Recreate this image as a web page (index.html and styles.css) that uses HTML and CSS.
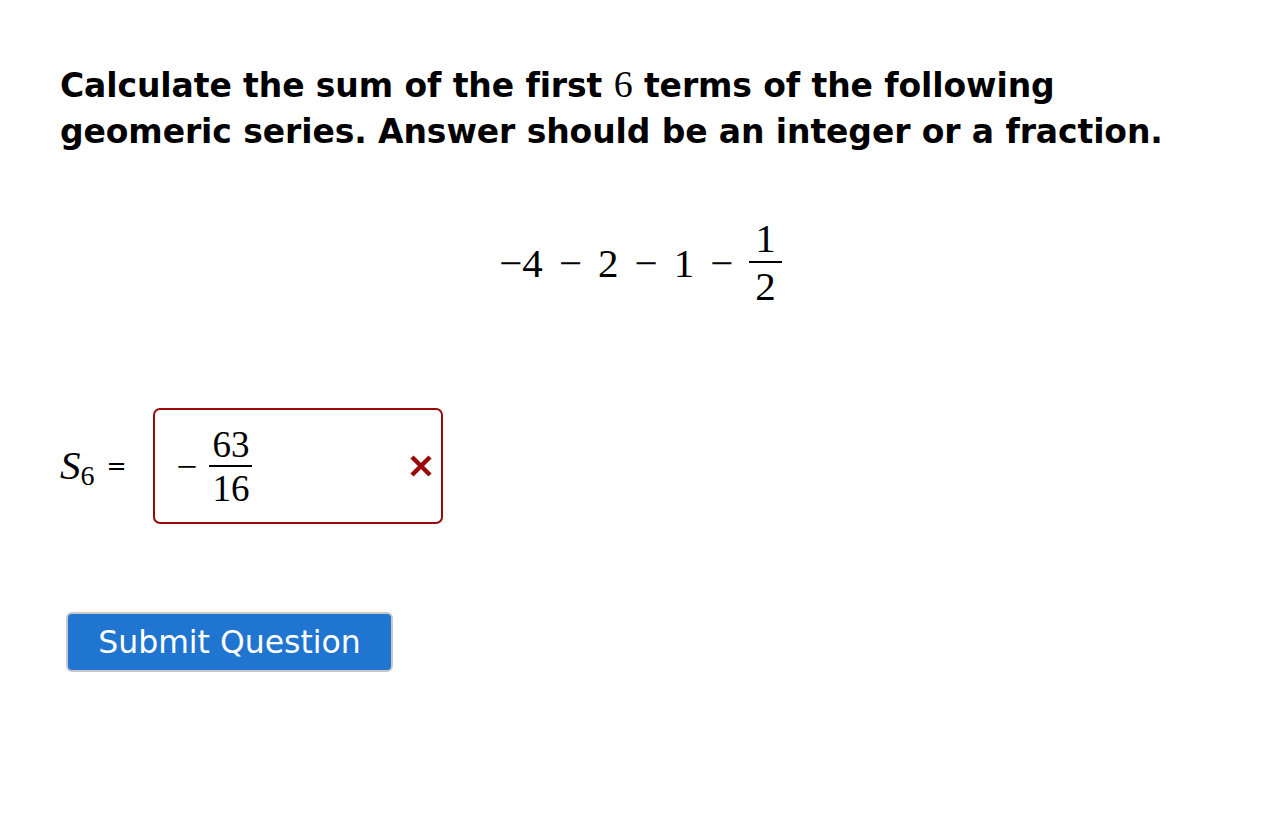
FILE: index.html
```html
<!DOCTYPE html>
<html lang="en">
<head>
  <meta charset="UTF-8" />
  <title>Geometric Series</title>
  <link rel="stylesheet" href="styles.css">
</head>
<body>
  <div class="question">
    <!-- Prompt -->
    <p class="prompt">Calculate the sum of the first <span class="num">6</span> terms of the following geomeric series. Answer should be an integer or a fraction.</p>

    <!-- Series -->
    <div class="series">
      <span>&minus;4</span><span class="op">&minus;</span><span>2</span><span class="op">&minus;</span><span>1</span><span class="op">&minus;</span>
      <span class="frac"><span class="top">1</span><span class="bot">2</span></span>
    </div>

    <!-- Answer -->
    <div class="answer">
      <span class="label"><i>S</i><sub>6</sub></span>
      <span class="eq">=</span>
      <div class="answer-box">
        <span class="minus">&minus;</span>
        <span class="frac small"><span class="top">63</span><span class="bot">16</span></span>
        <svg class="wrong" width="24" height="24" viewBox="0 0 24 24">
          <path d="M3 3 L21 21 M21 3 L3 21" stroke="#9b0a0a" stroke-width="4.5"/>
        </svg>
      </div>
    </div>

    <button class="submit">Submit Question</button>
  </div>
</body>
</html>
```

FILE: styles.css
```css
body {
  margin: 0;
  background: #fff;
  color: #000;
  font-family: 'DejaVu Sans', sans-serif;
}
.question {
  padding: 63px 0 0 60px;
}
.prompt {
  margin: 0;
  font-size: 33px;
  font-weight: bold;
  line-height: 46px;
  width: 1140px;
  letter-spacing: -0.1px;
}
.num {
  font-family: 'Liberation Serif', serif;
  font-weight: normal;
  font-size: 38px;
  line-height: 1;
}
.series {
  display: flex;
  justify-content: center;
  align-items: center;
  gap: 16px;
  margin: 63px 0 0 0;
  padding-right: 40px;
  font-family: 'Liberation Serif', serif;
  font-size: 41px;
}
.frac {
  display: inline-flex;
  flex-direction: column;
  align-items: center;
  line-height: 1;
}
.frac .top {
  padding: 0 6px 2px;
  border-bottom: 2px solid #000;
}
.frac .bot {
  padding-top: 3px;
}
.answer {
  display: flex;
  align-items: center;
  margin-top: 101px;
}
.label {
  font-family: 'Liberation Serif', serif;
  font-size: 41px;
}
.label sub {
  font-size: 28px;
  vertical-align: -6px;
  font-style: normal;
}
.eq {
  font-size: 24px;
  margin: 0 26px 0 12px;
}
.answer-box {
  display: flex;
  align-items: center;
  width: 290px;
  height: 116px;
  border: 2px solid #9b0a0a;
  border-radius: 7px;
  padding: 0 8px 0 22px;
  box-sizing: border-box;
  font-family: 'Liberation Serif', serif;
  font-size: 37px;
}
.answer-box .minus {
  margin-right: 12px;
}
.frac.small .top {
  padding: 0 3px 2px;
}
.wrong {
  margin-left: auto;
}
.submit {
  display: block;
  margin: 88px 0 0 6px;
  width: 327px;
  height: 60px;
  background: #1f75d0;
  color: #fff;
  border: 2px solid #c8c8c8;
  border-radius: 6px;
  font-family: 'DejaVu Sans', sans-serif;
  font-size: 31.5px;
  padding: 0;
}
```
